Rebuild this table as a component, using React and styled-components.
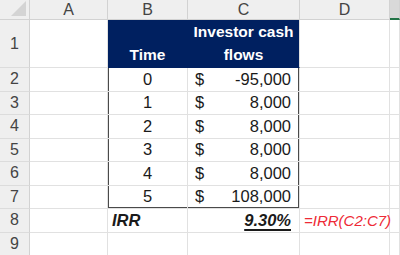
import styled, { createGlobalStyle } from 'styled-components';

const GlobalStyle = createGlobalStyle`
  html, body {
    margin: 0;
    padding: 0;
    background: #ffffff;
  }
  body {
    font-family: "Liberation Sans", Arial, sans-serif;
    overflow: hidden;
  }
`;

const GRID = '#e1e1e1';
const FRAME = '#4a4a4a';

const Sheet = styled.div`
  display: grid;
  grid-template-columns: 30px 78px 80px 112px 90px 1fr;
  grid-template-rows: 20px 48px repeat(8, 23.5px);
  width: 400px;
  height: 255px;
  overflow: hidden;
  font-size: 16.5px;
  color: #1a1a1a;
`;

const Corner = styled.div`
  position: relative;
  background: #efefef;
  border-right: 1px solid #d2d2d2;
  border-bottom: 1px solid #d2d2d2;
  box-sizing: border-box;

  &::after {
    content: '';
    position: absolute;
    right: 3px;
    bottom: 3px;
    width: 0;
    height: 0;
    border-left: 15px solid transparent;
    border-bottom: 15px solid #d4d4d4;
  }
`;

const ColHeader = styled.div`
  display: flex;
  align-items: center;
  justify-content: center;
  box-sizing: border-box;
  background: ${(p) => (p.$selected ? '#d9d9d9' : '#efefef')};
  border-right: 1px solid #d2d2d2;
  border-bottom: ${(p) => (p.$selected ? '2px solid #217346' : '1px solid #d2d2d2')};
  color: #444;
  font-size: 16px;
`;

const RowHeader = styled.div`
  display: flex;
  align-items: center;
  justify-content: center;
  box-sizing: border-box;
  background: #efefef;
  border-right: 1px solid #d2d2d2;
  border-bottom: 1px solid #dcdcdc;
  color: #444;
  font-size: 16px;
`;

const Cell = styled.div`
  display: flex;
  align-items: ${(p) => (p.$top ? 'flex-end' : 'center')};
  justify-content: ${(p) => p.$align || 'flex-start'};
  box-sizing: border-box;
  padding: 0 4px;
  border-right: 1px solid ${(p) => (p.$navy && !p.$last ? '#002060' : GRID)};
  border-bottom: 1px solid ${(p) => (p.$navy ? '#002060' : GRID)};
  background: ${(p) => (p.$navy ? '#002060' : 'transparent')};
  color: ${(p) => (p.$navy ? '#ffffff' : '#1a1a1a')};
  font-weight: ${(p) => (p.$bold ? 700 : 400)};
  font-style: ${(p) => (p.$italic ? 'italic' : 'normal')};
  box-shadow: ${(p) =>
    [
      p.$frameLeft && `inset 1px 0 0 ${FRAME}`,
      p.$frameRight && `inset -1px 0 0 ${FRAME}`,
      p.$frameBottom && `inset 0 -1px 0 ${FRAME}`,
    ]
      .filter(Boolean)
      .join(', ') || 'none'};
  white-space: nowrap;
  overflow: visible;
`;

const HeadText = styled.span`
  display: block;
  width: 100%;
  text-align: center;
  white-space: normal;
  font-size: 15.5px;
  line-height: 23px;
  padding-bottom: 1px;
`;

const Money = styled.div`
  display: flex;
  justify-content: space-between;
  width: 100%;
  padding: 0 4px 0 3px;
`;

const Percent = styled.span`
  text-decoration: underline;
  text-decoration-thickness: 2px;
  text-underline-offset: 3px;
  padding-right: 4px;
`;

const Formula = styled.span`
  color: #ee2a36;
  font-style: italic;
  font-size: 15px;
`;

const columns = ['A', 'B', 'C', 'D', ''];

const flows = [
  { t: 0, v: '-95,000' },
  { t: 1, v: '8,000' },
  { t: 2, v: '8,000' },
  { t: 3, v: '8,000' },
  { t: 4, v: '8,000' },
  { t: 5, v: '108,000' },
];

const App = () => {
  return (
    <>
      <GlobalStyle />
      <Sheet>
        <Corner />
        {columns.map((c, i) => (
          <ColHeader key={i} $selected={i === 4}>
            {c}
          </ColHeader>
        ))}

        {/* row 1 - header */}
        <RowHeader>1</RowHeader>
        <Cell />
        <Cell $navy $bold $top>
          <HeadText>Time</HeadText>
        </Cell>
        <Cell $navy $bold $top $last>
          <HeadText>Investor cash flows</HeadText>
        </Cell>
        <Cell />
        <Cell />

        {flows.map((row, i) => {
          const bottom = i === flows.length - 1;
          return [
            <RowHeader key={`h${i}`}>{i + 2}</RowHeader>,
            <Cell key={`a${i}`} />,
            <Cell key={`b${i}`} $align="center" $frameLeft $frameBottom={bottom}>
              {row.t}
            </Cell>,
            <Cell key={`c${i}`} $frameRight $frameBottom={bottom}>
              <Money>
                <span>$</span>
                <span>{row.v}</span>
              </Money>
            </Cell>,
            <Cell key={`d${i}`} />,
            <Cell key={`e${i}`} />,
          ];
        })}

        {/* row 8 - IRR */}
        <RowHeader>8</RowHeader>
        <Cell />
        <Cell $bold $italic>IRR</Cell>
        <Cell $bold $italic $align="flex-end">
          <Percent>9.30%</Percent>
        </Cell>
        <Cell>
          <Formula>=IRR(C2:C7)</Formula>
        </Cell>
        <Cell />

        <RowHeader>9</RowHeader>
        <Cell />
        <Cell />
        <Cell />
        <Cell />
        <Cell />
      </Sheet>
    </>
  );
};

export default App;
